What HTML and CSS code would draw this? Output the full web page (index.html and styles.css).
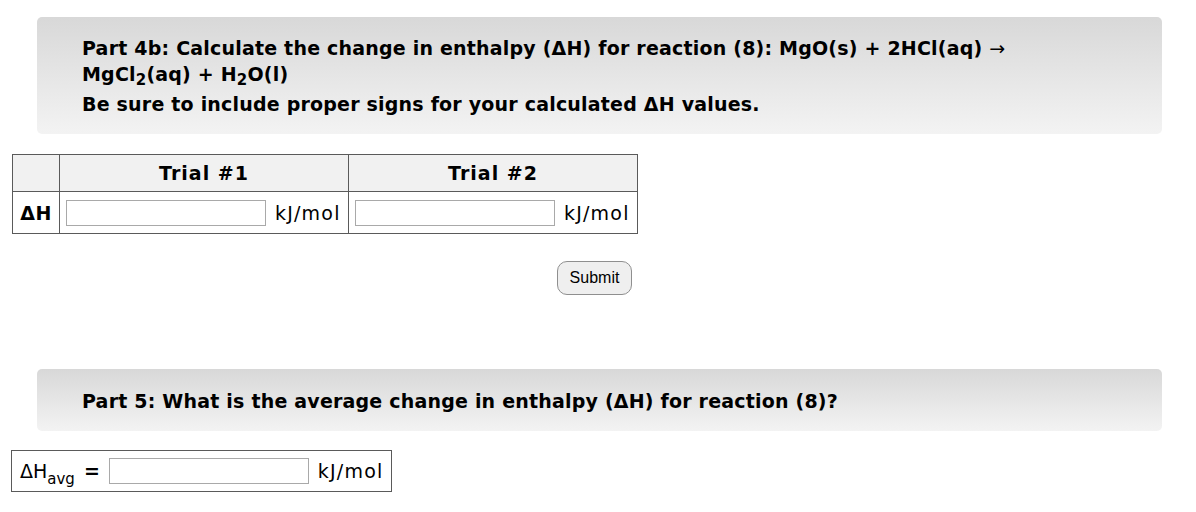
FILE: index.html
```html
<!DOCTYPE html>
<html>
<head>
<meta charset="utf-8">
<link rel="stylesheet" href="styles.css">
</head>
<body>
<div class="page">
  <div class="panel panel-4b">
    <p class="q-line">Part 4b: Calculate the change in enthalpy (ΔH) for reaction (8): MgO(s) + 2HCl(aq) <span class="arrow">→</span><br>MgCl<sub>2</sub>(aq) + H<sub>2</sub>O(l)</p>
    <p class="q-line q-note">Be sure to include proper signs for your calculated ΔH values.</p>
  </div>

  <div class="trial-wrap">
    <table class="trials">
      <tr class="head">
        <th class="corner"></th>
        <th class="trial">Trial #1</th>
        <th class="trial">Trial #2</th>
      </tr>
      <tr>
        <th class="label">ΔH</th>
        <td><input type="text" class="field"><span class="unit">kJ/mol</span></td>
        <td><input type="text" class="field"><span class="unit">kJ/mol</span></td>
      </tr>
    </table>
    <div class="submit-row"><button class="submit">Submit</button></div>
  </div>

  <div class="panel panel-5">
    <p class="q-line">Part 5: What is the average change in enthalpy (ΔH) for reaction (8)?</p>
  </div>

  <div class="avg">
    <span class="avg-label">ΔH<sub>avg</sub></span>
    <span class="eq">=</span>
    <input type="text" class="field">
    <span class="unit">kJ/mol</span>
  </div>
</div>
</body>
</html>
```

FILE: styles.css
```css
html, body {
  margin: 0;
  padding: 0;
  background: #fff;
}
body {
  font-family: "DejaVu Sans", Verdana, sans-serif;
  color: #000;
}
.page {
  padding-top: 17px;
}
.panel {
  margin-left: 37px;
  width: 1125px;
  box-sizing: border-box;
  padding: 0 0 0 45px;
  border-radius: 5px;
  background: linear-gradient(to bottom, #d8d8d8, #f3f3f3);
}
.panel-4b {
  height: 117px;
  padding-top: 18px;
}
.q-line {
  margin: 0;
  font-size: 19px;
  font-weight: bold;
  line-height: 26px;
  letter-spacing: 0.2px;
}
.q-line sub {
  font-size: 15px;
  line-height: 0;
  vertical-align: -4px;
}
.arrow {
  font-weight: normal;
}
.q-note {
  margin-top: 4px;
}
.trial-wrap {
  margin-top: 20px;
  margin-left: 12px;
  width: 626px;
}
.trials {
  border-collapse: collapse;
  width: 626px;
}
.trials th, .trials td {
  border: 1px solid #5a5a5a;
  padding: 0;
}
.trials .head th {
  background: #f1f1f1;
  height: 36px;
  font-size: 19px;
  font-weight: bold;
  letter-spacing: 1px;
}
.corner { width: 46px; }
.trial { width: 288px; }
.trials td {
  height: 41px;
  padding-left: 6px;
  font-size: 19px;
  white-space: nowrap;
}
.label {
  font-size: 19px;
  font-weight: bold;
  text-align: center;
  letter-spacing: 0.5px;
}
.field {
  width: 200px;
  height: 26px;
  box-sizing: border-box;
  border: 1px solid #a9a9a9;
  margin: 0 9px 0 0;
  padding: 0;
  vertical-align: middle;
  background: #fff;
}
.unit {
  font-size: 19px;
  letter-spacing: 1.2px;
  vertical-align: middle;
}
.submit-row {
  display: flex;
  justify-content: flex-end;
  padding-right: 6px;
  margin-top: 27px;
}
.submit {
  width: 75px;
  height: 34px;
  font-family: "Liberation Sans", Arial, sans-serif;
  font-size: 16px;
  color: #000;
  background: #efefef;
  border: 1px solid #8f8f8f;
  border-radius: 10px;
  padding: 0;
}
.panel-5 {
  margin-top: 74px;
  height: 62px;
  padding-top: 1px;
  display: flex;
  align-items: center;
}
.avg {
  margin: 19px 0 0 11px;
  width: 381px;
  height: 42px;
  box-sizing: border-box;
  border: 1px solid #5a5a5a;
  display: flex;
  align-items: center;
  padding-left: 8px;
  font-size: 19px;
}
.avg-label sub {
  font-size: 15px;
  line-height: 0;
  vertical-align: -6px;
}
.eq {
  font-weight: bold;
  margin: 0 9px 0 9px;
}
.avg .field {
  margin-right: 9px;
}
```
